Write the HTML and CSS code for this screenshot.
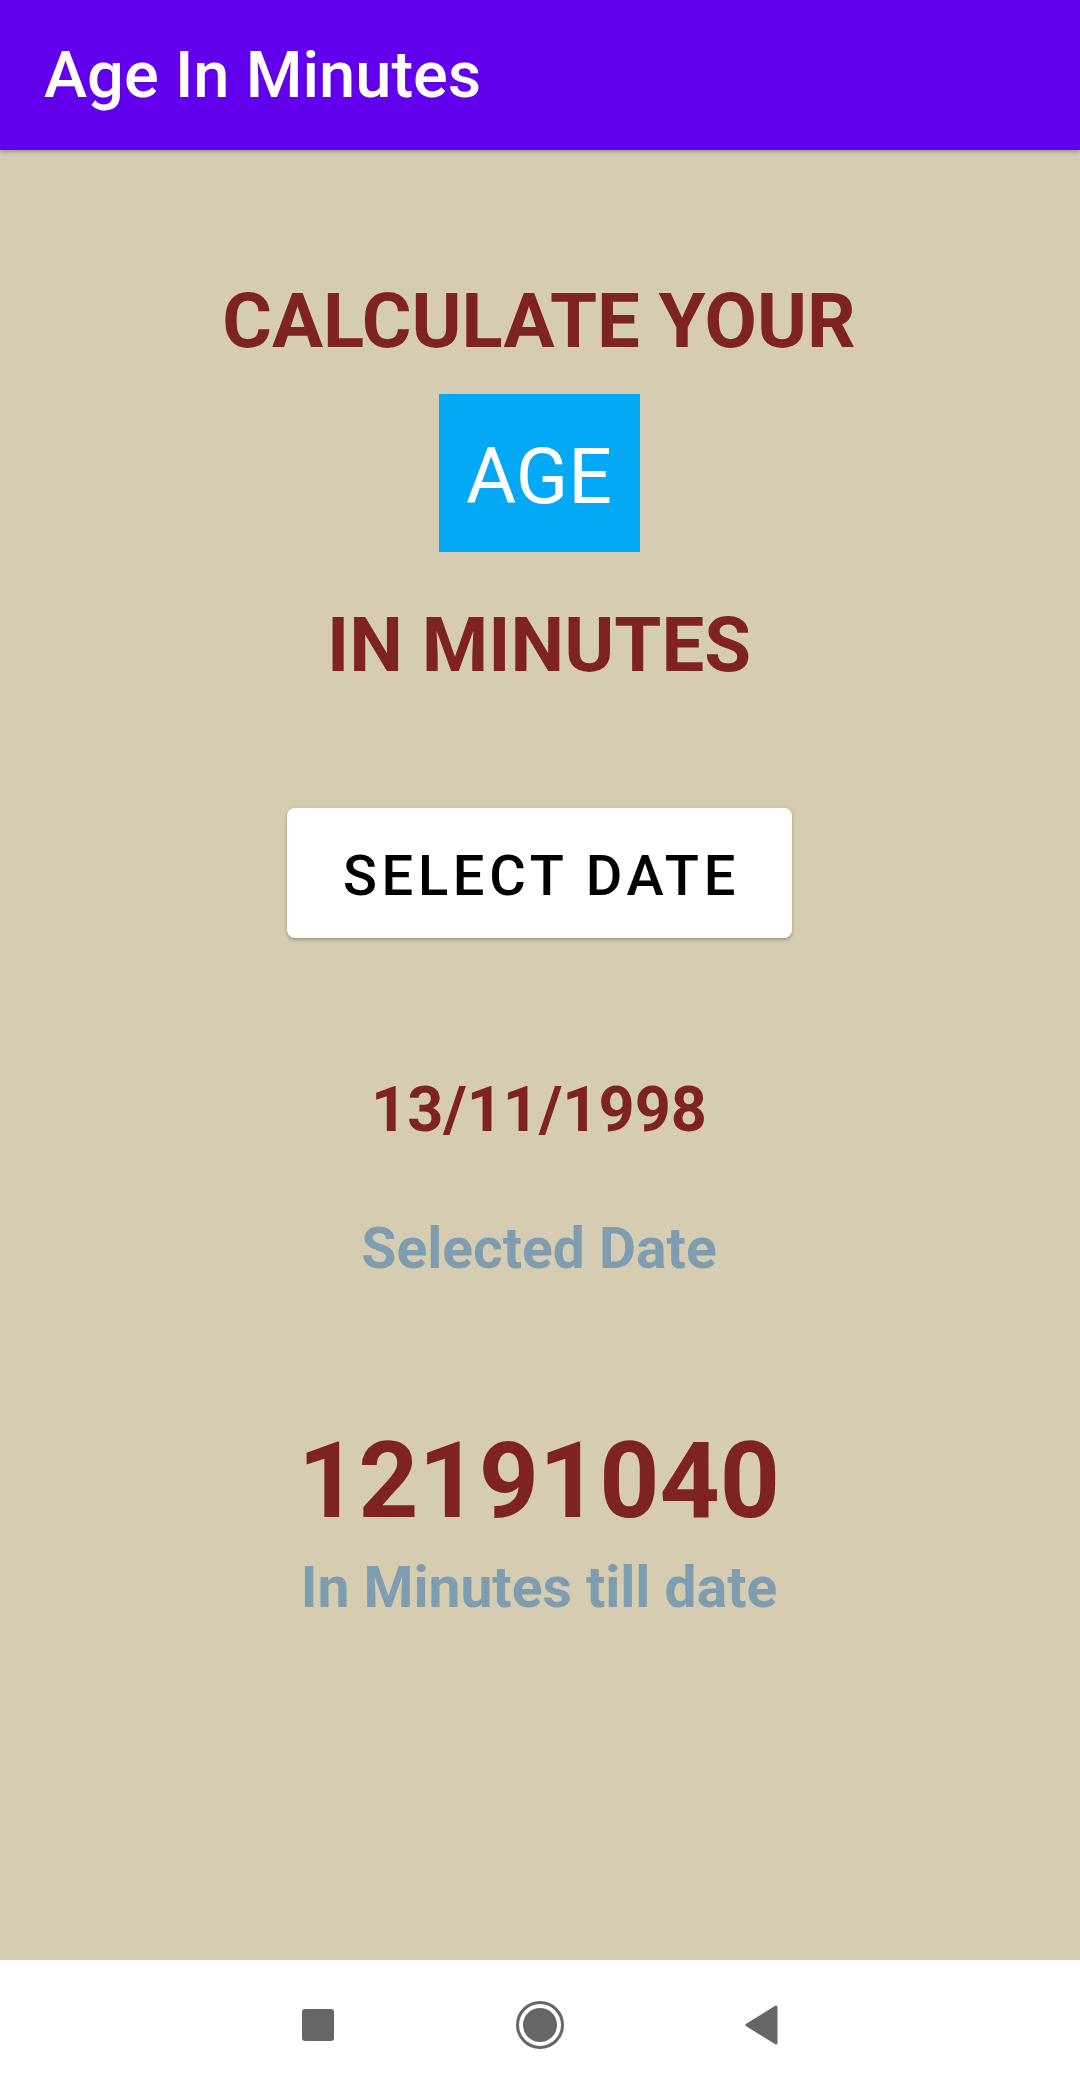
FILE: index.html
```html
<!doctype html>
<html lang="en">
<head>
  <meta charset="UTF-8">
  <meta name="viewport" content="width=device-width, initial-scale=1.0">
  <title>Age In Minutes</title>

  <link rel="stylesheet" href="styles.css">
</head>
<body>
  <div id="app">
    <header class="app-bar">
      <h1 class="app-title">Age In Minutes</h1>
    </header>

    <main class="content">
      <h2 class="headline">CALCULATE YOUR</h2>
      <div class="age-box">AGE</div>
      <h2 class="headline headline-minutes">IN MINUTES</h2>

      <button class="btn-select" type="button">SELECT DATE</button>

      <div class="date-value">13/11/1998</div>
      <div class="caption caption-date">Selected Date</div>

      <div class="minutes-value">12191040</div>
      <div class="caption caption-minutes">In Minutes till date</div>
    </main>

    <nav class="nav-bar">
      <div class="nav-item">
        <svg width="34" height="34" viewBox="0 0 34 34">
          <rect x="1" y="1" width="32" height="32" rx="3" fill="#666"/>
        </svg>
      </div>
      <div class="nav-item">
        <svg width="52" height="52" viewBox="0 0 52 52">
          <circle cx="26" cy="26" r="22.5" fill="none" stroke="#666" stroke-width="3"/>
          <circle cx="26" cy="26" r="17" fill="#666"/>
        </svg>
      </div>
      <div class="nav-item">
        <svg width="36" height="42" viewBox="0 0 36 42">
          <polygon points="3,21 32,3 32,39" fill="#666" stroke="#666" stroke-width="3" stroke-linejoin="round"/>
        </svg>
      </div>
    </nav>
  </div>
</body>
</html>
```

FILE: styles.css
```css
html, body {
    margin: 0;
    padding: 0;
}

body {
    font-family: Roboto, "Noto Sans", sans-serif;
}

#app {
    width: 1080px;
    height: 2090px;
    display: flex;
    flex-direction: column;
    background: #d6ccb1;
}

.app-bar {
    height: 150px;
    box-sizing: border-box;
    padding: 38px 0 0 44px;
    background-color: #6200ee;
    box-shadow: 0 2px 4px rgba(0, 0, 0, 0.25);
    position: relative;
    z-index: 1;
}

.app-title {
    margin: 0;
    color: #fff;
    font-size: 65px;
    font-weight: 500;
    line-height: 75px;
}

.content {
    flex: 1;
    display: flex;
    flex-direction: column;
    align-items: center;
    padding-right: 2px;
}

.headline {
    margin: 127px 0 0;
    color: #7f2222;
    font-size: 76px;
    font-weight: 700;
    line-height: 89px;
}

.headline-minutes {
    margin-top: 49px;
}

.age-box {
    margin-top: 28px;
    width: 201px;
    height: 158px;
    box-sizing: border-box;
    padding-top: 38px;
    text-align: center;
    color: #fff;
    background-color: #03a9f4;
    font-size: 77px;
    line-height: 90px;
}

.btn-select {
    margin-top: 118px;
    width: 505px;
    height: 130px;
    box-sizing: border-box;
    padding: 6px 0 0 5px;
    border: 0;
    border-radius: 8px;
    background: #fff;
    box-shadow: 0 2px 3px rgba(0, 0, 0, 0.2), 0 1px 6px rgba(0, 0, 0, 0.08);
    color: #000;
    font-family: Roboto, "Noto Sans", sans-serif;
    font-size: 56px;
    font-weight: 500;
    letter-spacing: 4.7px;
    line-height: 124px;
    cursor: pointer;
}

.date-value {
    margin-top: 135px;
    color: #7f2222;
    font-size: 63px;
    font-weight: 700;
    line-height: 74px;
}

.caption {
    color: #7f9db0;
    font-size: 57px;
    font-weight: 700;
    line-height: 67px;
}

.caption-date {
    margin-top: 68px;
}

.minutes-value {
    margin-top: 138px;
    color: #7f2222;
    font-size: 105px;
    font-weight: 700;
    line-height: 123px;
}

.caption-minutes {
    margin-top: 11px;
}

.nav-bar {
    height: 130px;
    display: flex;
    justify-content: center;
    align-items: center;
    background: #fff;
}

.nav-item {
    width: 222px;
    display: flex;
    justify-content: center;
    align-items: center;
}
```
